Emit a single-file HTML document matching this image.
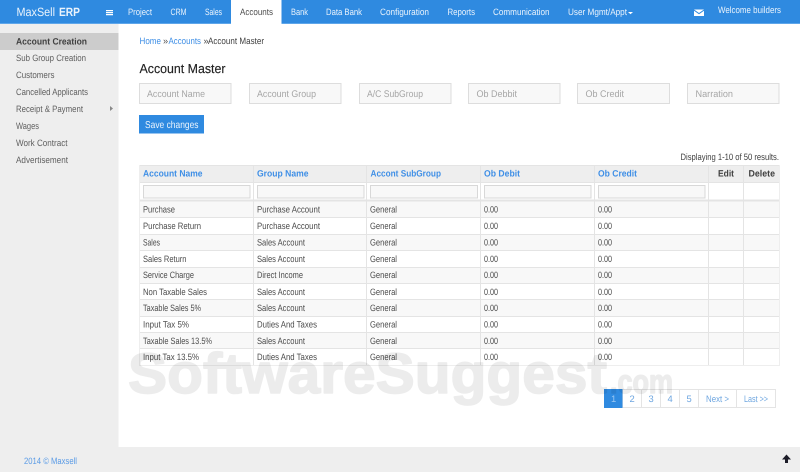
<!DOCTYPE html>
<html lang="en">
<head>
<meta charset="utf-8">
<title>MaxSell ERP - Account Master</title>
<style>
html,body{margin:0;padding:0;width:800px;height:472px;overflow:hidden;background:#fff}
svg{display:block}
text{font-family:"Liberation Sans",sans-serif;font-size:9.2px;fill:#4d4d4d;text-rendering:geometricPrecision}
.n{fill:#eaf3fc}
.s{fill:#5f5f5f}
.b{font-weight:bold}
.l{fill:#3f8fe6}
.p{fill:#a6a6a6;font-size:9.6px}
.c{fill:#4d4d4d}
.wm{opacity:.07}
.wm text{font-family:"Liberation Sans",sans-serif;font-weight:bold;fill:#000;stroke:#000;stroke-width:1.6px;stroke-linejoin:round}
.pg{fill:#6ea6e0;font-size:9.4px}
</style>
</head>
<body>
<svg width="800" height="472" viewBox="0 0 800 472" xmlns="http://www.w3.org/2000/svg">
<rect width="800" height="472" fill="#fff"/>
<!-- sidebar + footer -->
<rect x="0" y="24" width="118.500" height="448" fill="#eeeeee"/>
<rect x="0" y="447" width="800" height="25" fill="#eeeeee"/>
<rect x="0" y="33" width="118.500" height="17" fill="#cccccc"/>
<!-- navbar -->
<rect width="800" height="23" fill="#2f8ae0"/>
<rect y="23" width="800" height="1" fill="#5ea6ea"/>
<rect x="231" y="0" width="50.500" height="24" fill="#fff"/>
<text class="n" x="16.500" y="16" style="font-size:12px" textLength="38.500" lengthAdjust="spacingAndGlyphs">MaxSell</text>
<text class="n b" x="59" y="16" style="font-size:12px" textLength="21" lengthAdjust="spacingAndGlyphs">ERP</text>
<path d="M106 10h7v1.300h-7zM106 12h7v1.300h-7zM106 14h7v1.300h-7z" fill="#fff"/>
<text class="n" x="128" y="15" textLength="24" lengthAdjust="spacingAndGlyphs">Project</text>
<text class="n" x="170.500" y="15" textLength="16" lengthAdjust="spacingAndGlyphs">CRM</text>
<text class="n" x="205" y="15" textLength="17" lengthAdjust="spacingAndGlyphs">Sales</text>
<text x="240" y="15" textLength="33" lengthAdjust="spacingAndGlyphs">Accounts</text>
<text class="n" x="291" y="15" textLength="17" lengthAdjust="spacingAndGlyphs">Bank</text>
<text class="n" x="326" y="15" textLength="36" lengthAdjust="spacingAndGlyphs">Data Bank</text>
<text class="n" x="380" y="15" textLength="49" lengthAdjust="spacingAndGlyphs">Configuration</text>
<text class="n" x="447.500" y="15" textLength="27.500" lengthAdjust="spacingAndGlyphs">Reports</text>
<text class="n" x="493" y="15" textLength="56.500" lengthAdjust="spacingAndGlyphs">Communication</text>
<text class="n" x="568" y="15" textLength="59" lengthAdjust="spacingAndGlyphs">User Mgmt/Appt</text>
<path d="M628 12h5l-2.500 2.200z" fill="#fff"/>
<path d="M694 9.500h10l-5 3.500zM694 10.800v5.200h10v-5.200l-5 3.500z" fill="#fff"/>
<text class="n" x="718" y="13" textLength="63" lengthAdjust="spacingAndGlyphs">Welcome builders</text>
<!-- sidebar text -->
<text class="b" style="fill:#404040" x="16" y="44.500" textLength="71" lengthAdjust="spacingAndGlyphs">Account Creation</text>
<text class="s" x="16" y="61" textLength="70" lengthAdjust="spacingAndGlyphs">Sub Group Creation</text>
<text class="s" x="16" y="78" textLength="38.500" lengthAdjust="spacingAndGlyphs">Customers</text>
<text class="s" x="16" y="95" textLength="72" lengthAdjust="spacingAndGlyphs">Cancelled Applicants</text>
<text class="s" x="16" y="112" textLength="67" lengthAdjust="spacingAndGlyphs">Receipt &amp; Payment</text>
<path d="M110 106l3 2.500-3 2.500z" fill="#888"/>
<text class="s" x="16" y="129" textLength="23" lengthAdjust="spacingAndGlyphs">Wages</text>
<text class="s" x="16" y="146" textLength="51.500" lengthAdjust="spacingAndGlyphs">Work Contract</text>
<text class="s" x="16" y="163" textLength="52" lengthAdjust="spacingAndGlyphs">Advertisement</text>
<!-- breadcrumb + heading -->
<text class="l" x="139.500" y="44" textLength="21.500" lengthAdjust="spacingAndGlyphs">Home</text>
<text x="163" y="44">»</text>
<text class="l" x="168.500" y="44" textLength="32.500" lengthAdjust="spacingAndGlyphs">Accounts</text>
<text x="203.500" y="44" style="fill:#404040">»</text>
<text x="208" y="44" style="fill:#404040" textLength="56" lengthAdjust="spacingAndGlyphs">Account Master</text>
<text x="139.500" y="73" style="font-size:13px;fill:#222;stroke:#222;stroke-width:.15" textLength="86" lengthAdjust="spacingAndGlyphs">Account Master</text>
<!-- form inputs -->
<g fill="#f8f8f8" stroke="#dddddd" stroke-width="1">
<rect x="139.500" y="83.500" width="91.500" height="20"/>
<rect x="249.500" y="83.500" width="91.500" height="20"/>
<rect x="359.500" y="83.500" width="91.500" height="20"/>
<rect x="468.500" y="83.500" width="91.500" height="20"/>
<rect x="577.500" y="83.500" width="92" height="20"/>
<rect x="687.500" y="83.500" width="91.500" height="20"/>
</g>
<text class="p" x="147" y="97" textLength="58" lengthAdjust="spacingAndGlyphs">Account Name</text>
<text class="p" x="257" y="97" textLength="59" lengthAdjust="spacingAndGlyphs">Account Group</text>
<text class="p" x="367" y="97" textLength="56" lengthAdjust="spacingAndGlyphs">A/C SubGroup</text>
<text class="p" x="476.500" y="97" textLength="40.500" lengthAdjust="spacingAndGlyphs">Ob Debbit</text>
<text class="p" x="585.500" y="97" textLength="38.500" lengthAdjust="spacingAndGlyphs">Ob Credit</text>
<text class="p" x="695.500" y="97" textLength="37.500" lengthAdjust="spacingAndGlyphs">Narration</text>
<!-- button -->
<rect x="139" y="115" width="65" height="18.500" fill="#2f8ae0"/>
<text class="n" x="145" y="128" style="font-size:10px" textLength="53.500" lengthAdjust="spacingAndGlyphs">Save changes</text>
<text x="680.500" y="160" style="fill:#404040" textLength="98.500" lengthAdjust="spacingAndGlyphs">Displaying 1-10 of 50 results.</text>
<!-- table backgrounds -->
<rect x="139" y="165" width="640" height="17" fill="#eeeeee"/>
<rect x="139" y="201" width="640" height="17" fill="#f8f8f8"/>
<rect x="139" y="234.500" width="640" height="16.500" fill="#f8f8f8"/>
<rect x="139" y="267" width="640" height="16.500" fill="#f8f8f8"/>
<rect x="139" y="300" width="640" height="16" fill="#f8f8f8"/>
<rect x="139" y="332.500" width="640" height="16.500" fill="#f8f8f8"/>
<!-- table lines -->
<g stroke="#e4e4e4" stroke-width="1" fill="none">
<path d="M139 165.500H779.500M139 182.500H779.500M139 217.500H779.500M139 234.500H779.500M139 250.500H779.500M139 267.500H779.500M139 283.500H779.500M139 299.500H779.500M139 316.500H779.500M139 332.500H779.500M139 348.500H779.500"/>
<path d="M139 200.500H779.500" stroke-width="2"/>
<path d="M253.500 165V365.500M366.500 165V365.500M480.500 165V365.500M594.500 165V365.500M708.500 165V365.500M743.500 165V365.500"/>
</g>
<path d="M139.500 165V365.500H779.500V165" stroke="#eeeeee" stroke-width="1" fill="none"/>
<!-- table header -->
<text class="l b" x="143" y="176.500" textLength="59.500" lengthAdjust="spacingAndGlyphs">Account Name</text>
<text class="l b" x="257" y="176.500" textLength="51.500" lengthAdjust="spacingAndGlyphs">Group Name</text>
<text class="l b" x="370.500" y="176.500" textLength="70.500" lengthAdjust="spacingAndGlyphs">Accont SubGroup</text>
<text class="l b" x="484" y="176.500" textLength="36" lengthAdjust="spacingAndGlyphs">Ob Debit</text>
<text class="l b" x="598" y="176.500" textLength="39" lengthAdjust="spacingAndGlyphs">Ob Credit</text>
<text class="b" style="fill:#404040" x="718" y="176.500" textLength="16" lengthAdjust="spacingAndGlyphs">Edit</text>
<text class="b" style="fill:#404040" x="748.500" y="176.500" textLength="26.500" lengthAdjust="spacingAndGlyphs">Delete</text>
<!-- filter inputs -->
<g fill="#f8f8f8" stroke="#d8d8d8" stroke-width="1">
<rect x="143.500" y="185.500" width="106.500" height="12.500"/>
<rect x="257.500" y="185.500" width="106.500" height="12.500"/>
<rect x="370.500" y="185.500" width="107" height="12.500"/>
<rect x="484.500" y="185.500" width="106.500" height="12.500"/>
<rect x="598.500" y="185.500" width="106.500" height="12.500"/>
</g>
<!-- rows -->
<g class="rows">
<text class="c" x="143" y="212.500" textLength="32" lengthAdjust="spacingAndGlyphs">Purchase</text>
<text class="c" x="257" y="212.500" textLength="63" lengthAdjust="spacingAndGlyphs">Purchase Account</text>
<text class="c" x="370" y="212.500" textLength="27" lengthAdjust="spacingAndGlyphs">General</text>
<text class="c" x="484" y="212.500" textLength="14" lengthAdjust="spacingAndGlyphs">0.00</text>
<text class="c" x="598" y="212.500" textLength="14" lengthAdjust="spacingAndGlyphs">0.00</text>

<text class="c" x="143" y="229" textLength="58" lengthAdjust="spacingAndGlyphs">Purchase Return</text>
<text class="c" x="257" y="229" textLength="63" lengthAdjust="spacingAndGlyphs">Purchase Account</text>
<text class="c" x="370" y="229" textLength="27" lengthAdjust="spacingAndGlyphs">General</text>
<text class="c" x="484" y="229" textLength="14" lengthAdjust="spacingAndGlyphs">0.00</text>
<text class="c" x="598" y="229" textLength="14" lengthAdjust="spacingAndGlyphs">0.00</text>

<text class="c" x="143" y="245.500" textLength="17" lengthAdjust="spacingAndGlyphs">Sales</text>
<text class="c" x="257" y="245.500" textLength="48" lengthAdjust="spacingAndGlyphs">Sales Account</text>
<text class="c" x="370" y="245.500" textLength="27" lengthAdjust="spacingAndGlyphs">General</text>
<text class="c" x="484" y="245.500" textLength="14" lengthAdjust="spacingAndGlyphs">0.00</text>
<text class="c" x="598" y="245.500" textLength="14" lengthAdjust="spacingAndGlyphs">0.00</text>

<text class="c" x="143" y="262" textLength="43.500" lengthAdjust="spacingAndGlyphs">Sales Return</text>
<text class="c" x="257" y="262" textLength="48" lengthAdjust="spacingAndGlyphs">Sales Account</text>
<text class="c" x="370" y="262" textLength="27" lengthAdjust="spacingAndGlyphs">General</text>
<text class="c" x="484" y="262" textLength="14" lengthAdjust="spacingAndGlyphs">0.00</text>
<text class="c" x="598" y="262" textLength="14" lengthAdjust="spacingAndGlyphs">0.00</text>

<text class="c" x="143" y="278" textLength="51" lengthAdjust="spacingAndGlyphs">Service Charge</text>
<text class="c" x="257" y="278" textLength="46" lengthAdjust="spacingAndGlyphs">Direct Income</text>
<text class="c" x="370" y="278" textLength="27" lengthAdjust="spacingAndGlyphs">General</text>
<text class="c" x="484" y="278" textLength="14" lengthAdjust="spacingAndGlyphs">0.00</text>
<text class="c" x="598" y="278" textLength="14" lengthAdjust="spacingAndGlyphs">0.00</text>

<text class="c" x="143" y="295" textLength="64" lengthAdjust="spacingAndGlyphs">Non Taxable Sales</text>
<text class="c" x="257" y="295" textLength="48" lengthAdjust="spacingAndGlyphs">Sales Account</text>
<text class="c" x="370" y="295" textLength="27" lengthAdjust="spacingAndGlyphs">General</text>
<text class="c" x="484" y="295" textLength="14" lengthAdjust="spacingAndGlyphs">0.00</text>
<text class="c" x="598" y="295" textLength="14" lengthAdjust="spacingAndGlyphs">0.00</text>

<text class="c" x="143" y="311" textLength="58" lengthAdjust="spacingAndGlyphs">Taxable Sales 5%</text>
<text class="c" x="257" y="311" textLength="48" lengthAdjust="spacingAndGlyphs">Sales Account</text>
<text class="c" x="370" y="311" textLength="27" lengthAdjust="spacingAndGlyphs">General</text>
<text class="c" x="484" y="311" textLength="14" lengthAdjust="spacingAndGlyphs">0.00</text>
<text class="c" x="598" y="311" textLength="14" lengthAdjust="spacingAndGlyphs">0.00</text>

<text class="c" x="143" y="327.500" textLength="46" lengthAdjust="spacingAndGlyphs">Input Tax 5%</text>
<text class="c" x="257" y="327.500" textLength="60" lengthAdjust="spacingAndGlyphs">Duties And Taxes</text>
<text class="c" x="370" y="327.500" textLength="27" lengthAdjust="spacingAndGlyphs">General</text>
<text class="c" x="484" y="327.500" textLength="14" lengthAdjust="spacingAndGlyphs">0.00</text>
<text class="c" x="598" y="327.500" textLength="14" lengthAdjust="spacingAndGlyphs">0.00</text>

<text class="c" x="143" y="344" textLength="69" lengthAdjust="spacingAndGlyphs">Taxable Sales 13.5%</text>
<text class="c" x="257" y="344" textLength="48" lengthAdjust="spacingAndGlyphs">Sales Account</text>
<text class="c" x="370" y="344" textLength="27" lengthAdjust="spacingAndGlyphs">General</text>
<text class="c" x="484" y="344" textLength="14" lengthAdjust="spacingAndGlyphs">0.00</text>
<text class="c" x="598" y="344" textLength="14" lengthAdjust="spacingAndGlyphs">0.00</text>

<text class="c" x="143" y="360" textLength="56" lengthAdjust="spacingAndGlyphs">Input Tax 13.5%</text>
<text class="c" x="257" y="360" textLength="60" lengthAdjust="spacingAndGlyphs">Duties And Taxes</text>
<text class="c" x="370" y="360" textLength="27" lengthAdjust="spacingAndGlyphs">General</text>
<text class="c" x="484" y="360" textLength="14" lengthAdjust="spacingAndGlyphs">0.00</text>
<text class="c" x="598" y="360" textLength="14" lengthAdjust="spacingAndGlyphs">0.00</text>
</g>
<!-- pagination -->
<g fill="#fff" stroke="#e4e4e4" stroke-width="1">
<rect x="622.500" y="389.500" width="19" height="18"/>
<rect x="641.500" y="389.500" width="19" height="18"/>
<rect x="660.500" y="389.500" width="19" height="18"/>
<rect x="679.500" y="389.500" width="19" height="18"/>
<rect x="698.500" y="389.500" width="38" height="18"/>
<rect x="736.500" y="389.500" width="39" height="18"/>
</g>
<rect x="604" y="389" width="18.500" height="19" fill="#2f8ae0"/>
<text x="611" y="402" style="fill:#9cc8f2;font-size:9.4px">1</text>
<text class="pg" x="629.500" y="402">2</text>
<text class="pg" x="648.500" y="402">3</text>
<text class="pg" x="667.500" y="402">4</text>
<text class="pg" x="686.500" y="402">5</text>
<text class="pg" x="706" y="402" textLength="23" lengthAdjust="spacingAndGlyphs">Next &gt;</text>
<text class="pg" x="744" y="402" textLength="24" lengthAdjust="spacingAndGlyphs">Last &gt;&gt;</text>
<!-- watermark -->
<g class="wm">
<text x="128" y="393" style="font-size:57px" textLength="479" lengthAdjust="spacingAndGlyphs">SoftwareSuggest</text>
<text x="610" y="393" style="font-size:33px" textLength="63" lengthAdjust="spacingAndGlyphs">.com</text>
</g>
<!-- footer -->
<text x="24" y="464" style="fill:#5a9be6" textLength="53" lengthAdjust="spacingAndGlyphs">2014 © Maxsell</text>
<path d="M786.500 454.500L791 459.500h-3v3.500h-3v-3.500h-3z" fill="#1c1c28"/>
</svg>
</body>
</html>
